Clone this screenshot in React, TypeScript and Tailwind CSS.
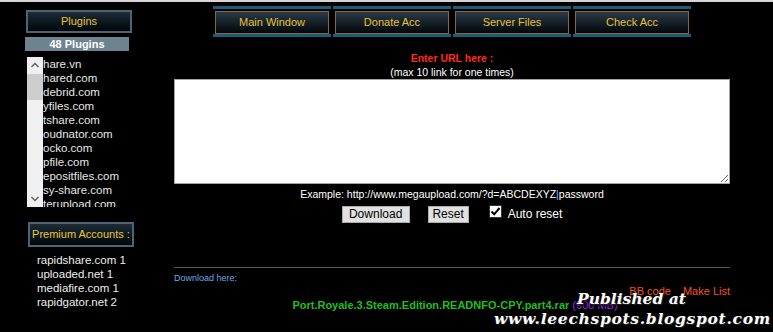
import React from "react";

const plugins = [
  "hare.vn",
  "hared.com",
  "debrid.com",
  "yfiles.com",
  "tshare.com",
  "oudnator.com",
  "ocko.com",
  "pfile.com",
  "epositfiles.com",
  "sy-share.com",
  "terupload.com",
];

const accounts = ["rapidshare.com 1", "uploaded.net 1", "mediafire.com 1", "rapidgator.net 2"];

const navItems = ["Main Window", "Donate Acc", "Server Files", "Check Acc"];

const NavButton = ({ label }: { label: string }) => (
  <div className="w-[118px] border-t-[3px] border-b-[3px] border-[#1f5b7c] pt-[2px] px-[2px]">
    <div className="h-[23px] border border-[#86693a] bg-gradient-to-b from-[#2c3b47] to-[#04080b] flex items-center justify-center text-[11px] text-[#e6c23c]">
      {label}
    </div>
  </div>
);

const SideTitle = ({ label, className }: { label: string; className: string }) => (
  <div
    className={`border-2 border-[#4c6574] bg-gradient-to-b from-[#1d2c36] to-[#03070a] flex items-center justify-center text-[11px] text-[#e8c43a] ${className}`}
  >
    {label}
  </div>
);

export default function App() {
  return (
    <div className="relative w-[773px] h-[332px] overflow-hidden bg-black font-['Liberation_Sans',Arial,sans-serif]">
      <div className="h-[2px] bg-[#d8d4d9]" />
      <div className="flex">
        {/* sidebar */}
        <aside className="w-[174px] shrink-0 pl-[25px] pt-[8px] flex flex-col">
          <SideTitle label="Plugins" className="ml-[1px] w-[106px] h-[23px]" />
          <div className="mt-[4px] w-[104px] h-[14px] bg-[#6d8390] text-white font-bold text-[11px] leading-[14px] text-center">
            48 Plugins
          </div>
          <div className="mt-[6px] ml-[2px] w-[104px] h-[150px] flex overflow-hidden">
            <div className="w-[16px] shrink-0 bg-[#f0f0f0] flex flex-col items-center">
              <svg width="16" height="17" viewBox="0 0 16 17">
                <path d="M4.5 10 L8 6.5 L11.5 10" fill="none" stroke="#606060" strokeWidth="1.5" />
              </svg>
              <div className="w-[16px] h-[26px] bg-[#cdcdcd]" />
              <div className="flex-1" />
              <svg width="16" height="17" viewBox="0 0 16 17">
                <path d="M4.5 7 L8 10.5 L11.5 7" fill="none" stroke="#606060" strokeWidth="1.5" />
              </svg>
            </div>
            <div className="text-[11.5px] leading-[14px] text-[#e6e6e6] whitespace-nowrap">
              {plugins.map((p) => (
                <div key={p}>{p}</div>
              ))}
            </div>
          </div>
          <SideTitle label="Premium Accounts :" className="mt-[15px] ml-[3px] w-[106px] h-[25px]" />
          <div className="mt-[6px] ml-[12px] text-[11.5px] leading-[14px] text-[#eeeeee]">
            {accounts.map((a) => (
              <div key={a}>{a}</div>
            ))}
          </div>
        </aside>

        {/* main */}
        <main className="w-[556px] shrink-0 flex flex-col items-center pt-[4px]">
          <div className="flex gap-[2px]">
            {navItems.map((n) => (
              <NavButton key={n} label={n} />
            ))}
          </div>
          <div className="mt-[14px] text-[10.5px] leading-[14px] font-bold text-[#ff2a1a]">Enter URL here :</div>
          <div className="text-[10.5px] leading-[14px] text-white">(max 10 link for one times)</div>
          <textarea
            readOnly
            className="block w-[556px] h-[105px] bg-white border border-[#a5a5a5] resize outline-none"
          />
          <div className="mt-[3px] text-[10.5px] leading-[14px] text-white">
            Example: http://www.megaupload.com/?d=ABCDEXYZ<span className="text-[#8fb4ff]">|</span>password
          </div>
          <div className="mt-[4px] flex items-center h-[18px]">
            <button className="w-[68px] h-[17px] bg-[#e1e1e1] border border-[#adadad] text-[12px] leading-[15px] text-black">
              Download
            </button>
            <button className="ml-[18px] w-[41px] h-[17px] bg-[#e1e1e1] border border-[#adadad] text-[12px] leading-[15px] text-black">
              Reset
            </button>
            <span className="ml-[20px] -mt-[5px] w-[13px] h-[13px] bg-white border border-[#333] flex items-center justify-center">
              <svg width="11" height="11" viewBox="0 0 11 11">
                <path d="M1.5 5.5 L4.2 8.3 L9.5 2" fill="none" stroke="#000" strokeWidth="2" />
              </svg>
            </span>
            <span className="ml-[6px] text-[12px] text-white">Auto reset</span>
          </div>
          <div className="self-stretch mt-[44px] h-px bg-[#555555]" />
          <div className="self-stretch mt-[4px] text-[9px] leading-[12px] text-[#6fa8e6]">Download here:</div>
          <div className="self-stretch flex justify-end gap-[12px] text-[11px] leading-[14px] text-[#ee5226]">
            <span>BB code</span>
            <span>Make List</span>
          </div>
          <div className="ml-[6px] text-[11px] leading-[14px] whitespace-nowrap">
            <span className="font-bold text-[#1fbf1f]">Port.Royale.3.Steam.Edition.READNFO-CPY.part4.rar</span>{" "}
            <span className="text-[#a028f2]">(900 MB)</span>
          </div>
        </main>
      </div>

      {/* watermark */}
      <div className="absolute left-[577px] top-[289px] font-['DejaVu_Serif',serif] italic font-bold text-[15.5px] leading-[20px] tracking-[0px] text-white [text-shadow:1px_1px_0_#222,2px_2px_2px_#000] whitespace-nowrap">
        Published at
      </div>
      <div className="absolute left-[494px] top-[309px] font-['DejaVu_Serif',serif] italic font-bold text-[15.5px] leading-[20px] tracking-[0.7px] text-white [text-shadow:1px_1px_0_#222,2px_2px_2px_#000] whitespace-nowrap">
        www.leechspots.blogspot.com
      </div>
    </div>
  );
}
